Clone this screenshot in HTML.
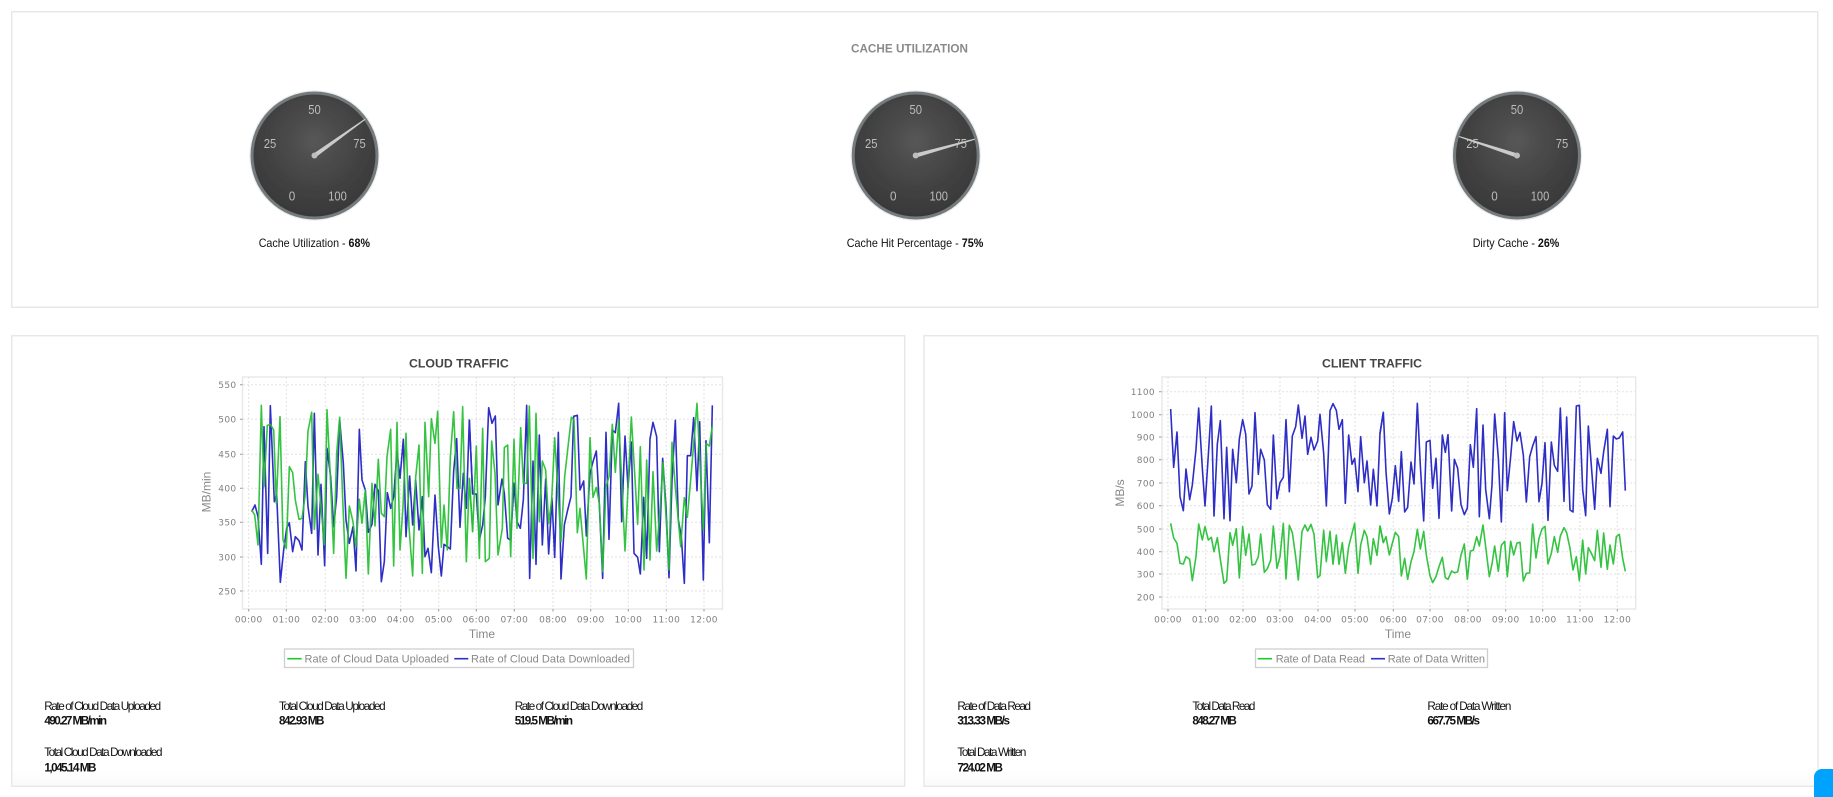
<!DOCTYPE html>
<html><head><meta charset="utf-8"><title>Cache and traffic dashboard</title>
<style>
html,body{margin:0;padding:0;background:#fff;width:1833px;height:797px;overflow:hidden}
svg{display:block;font-family:"Liberation Sans",sans-serif}
.gl{font-size:13px;fill:#bcbcbc;text-anchor:middle}
.cap{font-size:12px;fill:#111}
.tick{font-family:"DejaVu Sans",sans-serif;font-size:9px;fill:#808080;letter-spacing:.35px}
.ax{font-size:12px;fill:#888}
.leg{font-size:11px;fill:#888}
.t{font-size:11.7px;fill:#111}
.v{font-size:11.7px;fill:#111;font-weight:bold}
.grid{fill:none;stroke:#e2e2e2;stroke-width:1;stroke-dasharray:2 2}
.g{fill:none;stroke:#25bf33;stroke-width:1.6;stroke-linejoin:round;vector-effect:non-scaling-stroke;opacity:.92}
.b{fill:none;stroke:#2f2fc6;stroke-width:1.6;stroke-linejoin:round;vector-effect:non-scaling-stroke}
</style></head><body>
<svg width="1833" height="797" viewBox="0 0 1833 797" xmlns="http://www.w3.org/2000/svg">
<defs>
<filter id="soft" filterUnits="userSpaceOnUse" x="0" y="0" width="1833" height="797"><feGaussianBlur stdDeviation="0.3"/></filter>
<radialGradient id="face" cx="0.5" cy="0.38" r="0.6">
<stop offset="0" stop-color="#565756"/><stop offset="0.5" stop-color="#464646"/><stop offset="1" stop-color="#393939"/>
</radialGradient>
<linearGradient id="foot" x1="0" y1="0" x2="0" y2="1"><stop offset="0" stop-color="#fff"/><stop offset="1" stop-color="#fafafa"/></linearGradient>
<g id="dial">
<circle r="65.2" fill="#eeeeee"/>
<circle r="64" fill="#747a7d"/>
<circle r="61" fill="url(#face)"/>
</g>
</defs>

<!-- panels -->
<rect x="11.75" y="11.75" width="1806" height="295.5" fill="#fff" stroke="#e3e3e3" stroke-width="1.2"/>
<rect x="11.75" y="335.75" width="893" height="450.5" fill="#fff" stroke="#e3e3e3" stroke-width="1.2"/>
<rect x="924" y="335.75" width="894" height="450.5" fill="#fff" stroke="#e3e3e3" stroke-width="1.2"/>
<rect x="12.5" y="771" width="891.5" height="14.5" fill="url(#foot)"/>
<rect x="924.8" y="771" width="892.5" height="14.5" fill="url(#foot)"/>

<text x="909.5" y="52.5" text-anchor="middle" font-size="12px" font-weight="bold" fill="#8a8a8a" textLength="117" lengthAdjust="spacingAndGlyphs">CACHE UTILIZATION</text>

<g filter="url(#soft)">
<!-- gauge 1 -->
<g transform="translate(314.5,155.5)">
<use href="#dial"/>
<text class="gl" x="0" y="-41.5" textLength="12.5" lengthAdjust="spacingAndGlyphs">50</text>
<text class="gl" x="-44.5" y="-7.5" textLength="12.5" lengthAdjust="spacingAndGlyphs">25</text>
<text class="gl" x="45" y="-7.5" textLength="12.5" lengthAdjust="spacingAndGlyphs">75</text>
<text class="gl" x="-22.5" y="45" textLength="6.5" lengthAdjust="spacingAndGlyphs">0</text>
<text class="gl" x="23" y="45" textLength="18.5" lengthAdjust="spacingAndGlyphs">100</text>
<polygon points="1.25,1.75 -1.25,-1.75 50.37,-36.75 51.03,-35.85" fill="#cbcbcb"/>
<circle r="3" fill="#bdbdbd"/>
</g>
<!-- gauge 2 -->
<g transform="translate(915.7,155.5)">
<use href="#dial"/>
<text class="gl" x="0" y="-41.5" textLength="12.5" lengthAdjust="spacingAndGlyphs">50</text>
<text class="gl" x="-44.5" y="-7.5" textLength="12.5" lengthAdjust="spacingAndGlyphs">25</text>
<text class="gl" x="45" y="-7.5" textLength="12.5" lengthAdjust="spacingAndGlyphs">75</text>
<text class="gl" x="-22.5" y="45" textLength="6.5" lengthAdjust="spacingAndGlyphs">0</text>
<text class="gl" x="23" y="45" textLength="18.5" lengthAdjust="spacingAndGlyphs">100</text>
<polygon points=".57,2.05 -.57,-2.05 58.85,-16.85 59.15,-15.75" fill="#cbcbcb"/>
<circle r="3" fill="#bdbdbd"/>
</g>
<!-- gauge 3 -->
<g transform="translate(1517,155.5)">
<use href="#dial"/>
<text class="gl" x="0" y="-41.5" textLength="12.5" lengthAdjust="spacingAndGlyphs">50</text>
<text class="gl" x="-44.5" y="-7.5" textLength="12.5" lengthAdjust="spacingAndGlyphs">25</text>
<text class="gl" x="45" y="-7.5" textLength="12.5" lengthAdjust="spacingAndGlyphs">75</text>
<text class="gl" x="-22.5" y="45" textLength="6.5" lengthAdjust="spacingAndGlyphs">0</text>
<text class="gl" x="23" y="45" textLength="18.5" lengthAdjust="spacingAndGlyphs">100</text>
<polygon points=".65,-2 -.65,2 -58.17,-18.47 -57.83,-19.53" fill="#cbcbcb"/>
<circle r="3" fill="#bdbdbd"/>
</g>
</g>
<text class="cap" x="258.7" y="247.2" textLength="111.3" lengthAdjust="spacingAndGlyphs">Cache Utilization - <tspan font-weight="bold">68%</tspan></text>
<text class="cap" x="846.7" y="247.2" textLength="136.6" lengthAdjust="spacingAndGlyphs">Cache Hit Percentage - <tspan font-weight="bold">75%</tspan></text>
<text class="cap" x="1472.7" y="247.2" textLength="86.6" lengthAdjust="spacingAndGlyphs">Dirty Cache - <tspan font-weight="bold">26%</tspan></text>

<g filter="url(#soft)">
<!-- CLOUD TRAFFIC chart -->
<text x="409" y="367.3" font-size="12px" font-weight="bold" fill="#444" textLength="99.7" lengthAdjust="spacingAndGlyphs">CLOUD TRAFFIC</text>
<rect x="242.5" y="377" width="480" height="232" fill="#fff" stroke="#e8e8e8" stroke-width="1.4"/>
<path class="grid" d="M243 384.7H722M243 419.3H722M243 454.3H722M243 488.3H722M243 522.3H722M243 557H722M243 591H722M248.7 377V609M286.3 377V609M325.3 377V609M363 377V609M400.7 377V609M438.7 377V609M476.3 377V609M514.3 377V609M553 377V609M590.7 377V609M628.3 377V609M666.3 377V609M704 377V609"/>
<path d="M240 384.7h2.5M240 419.3h2.5M240 454.3h2.5M240 488.3h2.5M240 522.3h2.5M240 557h2.5M240 591h2.5M248.7 609v2.5M286.3 609v2.5M325.3 609v2.5M363 609v2.5M400.7 609v2.5M438.7 609v2.5M476.3 609v2.5M514.3 609v2.5M553 609v2.5M590.7 609v2.5M628.3 609v2.5M666.3 609v2.5M704 609v2.5" stroke="#999" stroke-width="1" fill="none"/>
<g class="tick" text-anchor="end">
<text x="236.5" y="388.1">550</text><text x="236.5" y="422.7">500</text><text x="236.5" y="457.7">450</text><text x="236.5" y="491.7">400</text><text x="236.5" y="525.7">350</text><text x="236.5" y="560.4">300</text><text x="236.5" y="594.4">250</text>
</g>
<g class="tick" text-anchor="middle">
<text x="248.7" y="622.5">00:00</text><text x="286.3" y="622.5">01:00</text><text x="325.3" y="622.5">02:00</text><text x="363" y="622.5">03:00</text><text x="400.7" y="622.5">04:00</text><text x="438.7" y="622.5">05:00</text><text x="476.3" y="622.5">06:00</text><text x="514.3" y="622.5">07:00</text><text x="553" y="622.5">08:00</text><text x="590.7" y="622.5">09:00</text><text x="628.3" y="622.5">10:00</text><text x="666.3" y="622.5">11:00</text><text x="704" y="622.5">12:00</text>
</g>
<text class="ax" transform="translate(210.5,492) rotate(-90)" text-anchor="middle">MB/min</text>
<text class="ax" x="482" y="638" text-anchor="middle">Time</text>

<g transform="translate(190,340) scale(.33333)">
<polyline class="b" points="185,515 195,495 204,530 214,673 222,260 233,640 241,197 253,485 260,462 271,727 281,630 290,565 298,548 308,635 316,590 327,602 336,630 346,365 354,500 365,580 373,220 384,645 393,433 404,677 411,325 422,410 431,560 440,470 449,240 460,370 468,540 478,610 489,560 498,693 508,268 516,420 526,450 535,577 546,553 555,433 565,452 574,725 583,665 592,458 602,505 611,470 621,335 630,415 640,298 648,590 659,408 668,555 677,420 687,570 697,470 705,650 714,625 724,698 735,465 745,620 754,708 762,613 772,620 781,627 791,393 800,296 810,562 820,400 829,505 838,240 848,462"/>
</g>
<g transform="translate(470,340) scale(.33333)">
<polyline class="b" points="-2,240 8,462 19,462 28,600 38,555 46,470 56,203 66,250 76,228 84,495 96,417 103,460 113,595 122,600 132,430 141,545 151,565 160,480 170,196 179,715 189,363 198,673 208,285 217,615 227,417 236,642 246,476 254,652 265,277 273,717 283,555 293,510 303,470 311,229 322,226 330,450 341,423 349,588 360,400 369,365 379,333 388,495 398,715 408,277 417,598 427,270 436,278 446,190 455,545 465,288 474,443 484,306 492,640 503,652 511,702 521,472 530,655 540,297 549,247 560,290 568,635 578,355 588,500 597,713 606,420 616,241 625,540 634,590 643,730 652,347 662,347 671,233 681,452 689,245 700,720 708,302 718,608 727,196"/>
</g>
<g transform="translate(190,340) scale(.33333)">
<polyline class="g" points="185,510 194,525 204,615 214,196 222,440 232,256 241,253 251,270 259,490 270,230 279,600 289,625 298,380 308,398 316,480 327,538 336,535 345,470 354,273 365,217 373,568 384,403 393,500 403,615 411,209 420,390 431,640 440,340 449,232 458,475 468,715 478,498 489,545 498,620 508,478 516,550 526,450 535,702 546,430 555,558 565,358 574,520 583,530 591,350 602,268 611,678 621,247 630,630 639,500 648,280 657,560 668,708 677,412 687,315 697,700 705,247 716,470 724,236 735,310 743,214 754,622 762,495 772,630 781,352 791,215 801,445 810,445 818,200 829,665 838,415 848,575"/>
</g>
<g transform="translate(470,340) scale(.33333)">
<polyline class="g" points="-2,415 8,575 19,318 28,655 38,265 46,665 58,655 65,303 75,400 84,645 97,565 103,323 113,315 122,650 132,298 141,565 152,263 160,430 170,430 178,198 189,655 198,220 208,545 217,363 227,390 236,550 245,480 254,293 273,605 284,410 304,232 312,240 322,578 330,505 349,717 360,293 369,472 379,442 388,490 398,695 408,440 417,410 427,253 436,397 446,240 455,420 465,633 484,231 503,553 511,320 522,690 530,360 540,660 549,395 560,633 570,510 579,368 597,690 606,307 615,430 632,620 643,473 652,532 662,420 681,190 700,570 709,311 718,318 727,258"/>
</g>

<!-- legend 1 -->
<rect x="284.5" y="649" width="349" height="18.5" fill="#fff" stroke="#cfcfcf" stroke-width="1.3"/>
<path d="M287.3 658.7h14.4" stroke="#1fc92c" stroke-width="1.6"/>
<text class="leg" x="304.5" y="662.6" textLength="144.5">Rate of Cloud Data Uploaded</text>
<path d="M454.3 658.7h14" stroke="#2f2fc6" stroke-width="1.6"/>
<text class="leg" x="471" y="662.6" textLength="159">Rate of Cloud Data Downloaded</text>

<!-- CLIENT TRAFFIC chart -->
<text x="1322" y="367.3" font-size="12px" font-weight="bold" fill="#444" textLength="100" lengthAdjust="spacingAndGlyphs">CLIENT TRAFFIC</text>
<rect x="1162" y="377" width="473.7" height="232" fill="#fff" stroke="#e8e8e8" stroke-width="1.4"/>
<path class="grid" d="M1162 391.7H1635M1162 414.7H1635M1162 437H1635M1162 459.7H1635M1162 483H1635M1162 505.7H1635M1162 529H1635M1162 551.7H1635M1162 574H1635M1162 597H1635M1168 377V609M1205.7 377V609M1243 377V609M1280 377V609M1318 377V609M1355 377V609M1393.3 377V609M1430 377V609M1468 377V609M1505.7 377V609M1542.7 377V609M1580 377V609M1617.3 377V609"/>
<path d="M1159 391.7h2.5M1159 414.7h2.5M1159 437h2.5M1159 459.7h2.5M1159 483h2.5M1159 505.7h2.5M1159 529h2.5M1159 551.7h2.5M1159 574h2.5M1159 597h2.5M1168 609v2.5M1205.7 609v2.5M1243 609v2.5M1280 609v2.5M1318 609v2.5M1355 609v2.5M1393.3 609v2.5M1430 609v2.5M1468 609v2.5M1505.7 609v2.5M1542.7 609v2.5M1580 609v2.5M1617.3 609v2.5" stroke="#999" stroke-width="1" fill="none"/>
<g class="tick" text-anchor="end">
<text x="1155" y="395.1">1100</text><text x="1155" y="418.1">1000</text><text x="1155" y="440.4">900</text><text x="1155" y="463.1">800</text><text x="1155" y="486.4">700</text><text x="1155" y="509.1">600</text><text x="1155" y="532.4">500</text><text x="1155" y="555.1">400</text><text x="1155" y="577.4">300</text><text x="1155" y="600.4">200</text>
</g>
<g class="tick" text-anchor="middle">
<text x="1168" y="622.5">00:00</text><text x="1205.7" y="622.5">01:00</text><text x="1243" y="622.5">02:00</text><text x="1280" y="622.5">03:00</text><text x="1318" y="622.5">04:00</text><text x="1355" y="622.5">05:00</text><text x="1393.3" y="622.5">06:00</text><text x="1430" y="622.5">07:00</text><text x="1468" y="622.5">08:00</text><text x="1505.7" y="622.5">09:00</text><text x="1542.7" y="622.5">10:00</text><text x="1580" y="622.5">11:00</text><text x="1617.3" y="622.5">12:00</text>
</g>
<text class="ax" transform="translate(1124,493) rotate(-90)" text-anchor="middle">MB/s</text>
<text class="ax" x="1398" y="638" text-anchor="middle">Time</text>

<g transform="translate(1100,370) scale(.33333)">
<polyline class="b" points="212,117 221,292 231,186 240,380 250,422 258,297 269,389 277,345 288,238 296,114 307,295 315,408 325,255 334,108 342,438 352,222 361,152 372,446 380,232 390,452 398,238 409,338 418,207 428,149 437,192 447,372 456,348 465,128 475,313 482,238 493,270 502,404 512,418 520,195 531,386 540,338 550,322 558,149 568,365 577,198 587,170 595,105 606,205 615,138 623,253 633,202 642,240 653,213 660,133 671,250 679,408 690,122 699,101 709,121 717,178 727,149 736,400 746,195 756,283 764,265 774,365 782,200 793,338 801,273 812,405 820,298 831,408 840,190 850,127"/>
<polyline class="g" points="212,460 221,504 231,520 240,580 250,582 258,560 269,568 277,632 288,560 296,462 307,510 315,470 325,510 334,502 342,545 352,503 361,568 372,640 380,632 390,488 398,526 409,476 418,624 428,470 437,556 447,492 456,585 465,583 475,560 482,492 493,607 502,596 512,571 520,468 531,595 540,560 550,460 558,627 568,466 577,488 587,560 595,630 606,484 615,465 623,483 633,463 642,492 653,623 660,617 671,481 679,575 690,484 699,583 709,495 717,583 727,518 736,610 746,530 756,490 764,460 774,610 782,525 793,481 801,500 812,583 820,506 831,556 840,468 850,518"/>
</g>
<g transform="translate(1380,370) scale(.33333)">
<polyline class="b" points="0,190 10,127 18,305 28,432 37,385 46,287 56,394 64,245 74,426 83,412 93,276 102,342 112,100 121,287 131,453 139,216 150,211 158,355 168,265 177,445 187,195 196,247 204,194 215,423 223,268 233,295 243,404 253,434 262,414 271,224 280,292 290,116 298,440 309,165 317,358 328,446 336,345 344,132 355,264 364,456 374,128 382,362 392,260 401,155 411,213 420,187 430,255 439,396 449,260 458,228 468,200 477,395 486,340 495,218 504,451 514,216 523,286 533,304 541,114 552,394 560,141 570,420 579,426 589,108 598,106 608,358 617,437 625,168 635,300 644,418 652,265 663,310 671,245 682,178 690,410 700,198 709,207 718,204 728,186 736,362"/>
<polyline class="g" points="0,468 10,518 18,500 28,555 37,520 46,487 56,500 64,618 74,565 83,628 93,575 102,545 112,478 121,537 131,484 139,555 150,617 158,638 168,620 177,590 187,562 196,623 204,628 215,603 223,608 233,606 243,555 253,522 262,628 271,543 280,541 290,500 298,528 309,465 317,530 328,620 336,582 344,528 355,604 364,526 374,514 382,620 392,514 401,555 411,519 420,517 430,633 439,610 449,609 458,462 468,564 477,505 486,477 495,469 504,582 514,550 523,500 533,547 541,498 552,473 560,488 570,535 579,600 589,560 598,632 608,510 617,612 625,533 635,552 644,572 652,481 663,592 671,489 682,598 690,525 700,582 709,500 718,493 728,565 736,604"/>
</g>

<!-- legend 2 -->
<rect x="1255.5" y="649" width="232" height="18.5" fill="#fff" stroke="#cfcfcf" stroke-width="1.3"/>
<path d="M1257.7 658.7h14.3" stroke="#1fc92c" stroke-width="1.6"/>
<text class="leg" x="1275.7" y="662.6" textLength="89.3">Rate of Data Read</text>
<path d="M1371 658.7h14" stroke="#2f2fc6" stroke-width="1.6"/>
<text class="leg" x="1387.7" y="662.6" textLength="97.3">Rate of Data Written</text>
</g>

<!-- stat tables: cloud -->
<text class="t" x="44.2" y="710" textLength="117">Rate of Cloud Data Uploaded</text>
<text class="v" x="44.4" y="724.3" textLength="62.6">490.27 MB/min</text>
<text class="t" x="279" y="710" textLength="106.7">Total Cloud Data Uploaded</text>
<text class="v" x="279" y="724.3" textLength="45.5">842.93 MB</text>
<text class="t" x="514.7" y="710" textLength="128.6">Rate of Cloud Data Downloaded</text>
<text class="v" x="514.7" y="724.3" textLength="58.3">519.5 MB/min</text>
<text class="t" x="44.2" y="756" textLength="118.3">Total Cloud Data Downloaded</text>
<text class="v" x="44.4" y="771.3" textLength="52">1,045.14 MB</text>

<!-- stat tables: client -->
<text class="t" x="957.4" y="710" textLength="73.6">Rate of Data Read</text>
<text class="v" x="957.4" y="724.3" textLength="52.6">313.33 MB/s</text>
<text class="t" x="1192.4" y="710" textLength="63">Total Data Read</text>
<text class="v" x="1192.4" y="724.3" textLength="44.4">848.27 MB</text>
<text class="t" x="1427.4" y="710" textLength="84">Rate of Data Written</text>
<text class="v" x="1427.4" y="724.3" textLength="52.6">667.75 MB/s</text>
<text class="t" x="957.4" y="756" textLength="69">Total Data Written</text>
<text class="v" x="957.4" y="771.3" textLength="45.6">724.02 MB</text>

<!-- corner tab -->
<path d="M1814 797V777a8 8 0 0 1 8-8H1833V797Z" fill="#00a2ff"/>
</svg>
</body></html>
